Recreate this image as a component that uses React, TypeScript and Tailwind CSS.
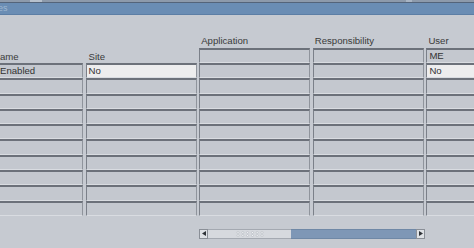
const rows = 10;

type Col = {
  header: string;
  top: boolean; // header sits above row 0 (true) or inside row 0 slot (false)
  row0?: string;
  values: { [i: number]: { text: string; white?: boolean } };
};

const columns: Col[] = [
  { header: 'Name', top: false, values: { 0: { text: 'Enabled' } } },
  { header: 'Site', top: false, values: { 0: { text: 'No', white: true } } },
  { header: 'Application', top: true, row0: '', values: {} },
  { header: 'Responsibility', top: true, row0: '', values: {} },
  { header: 'User', top: true, row0: 'ME', values: { 0: { text: 'No', white: true } } },
];

function Cell({ text, white, tight }: { text?: string; white?: boolean; tight?: boolean }) {
  return (
    <div
      className={`h-[15.3px] border-t-2 border-l border-r border-b border-t-[#6c717a] border-l-[#7b8089] border-r-[#8f949c] border-b-[#d9dce1] text-[9.6px] leading-[12px] text-[#333] ${
        tight ? 'pl-0' : 'pl-[2px]'
      } ${white ? 'bg-[#ededee]' : 'bg-[#c4c8cf]'}`}
    >
      {text}
    </div>
  );
}

function Scrollbar() {
  return (
    <div className="flex h-[10px] w-[226px] ml-[199px] mt-[13px]">
      <div className="w-[9px] h-full bg-[#dfe2e6] border border-[#8a8f97] flex items-center justify-center">
        <svg width="4" height="5" viewBox="0 0 4 5">
          <path d="M4 0 L0 2.5 L4 5 Z" fill="#2f3338" />
        </svg>
      </div>
      <div className="w-[83px] h-full bg-[#d6d9de] border-t border-b border-[#a4a9b1] flex items-center justify-center">
        <svg width="28" height="6" viewBox="0 0 28 6">
          {[0, 1, 2, 3, 4, 5].map((i) => (
            <g key={i}>
              <circle cx={2 + i * 4.8} cy={1.5} r={1} fill="#f5f6f8" stroke="#a9aeb6" strokeWidth={0.5} />
              <circle cx={2 + i * 4.8} cy={4.5} r={1} fill="#f5f6f8" stroke="#a9aeb6" strokeWidth={0.5} />
            </g>
          ))}
        </svg>
      </div>
      <div className="flex-1 h-full bg-[#7e97b6] border-t border-b border-[#6f88a6]" />
      <div className="w-[9px] h-full bg-[#dfe2e6] border border-[#8a8f97] flex items-center justify-center">
        <svg width="4" height="5" viewBox="0 0 4 5">
          <path d="M0 0 L4 2.5 L0 5 Z" fill="#2f3338" />
        </svg>
      </div>
    </div>
  );
}

export default function App() {
  return (
    <div className="w-[474px] h-[248px] overflow-hidden bg-[#c6cad1] font-['Liberation_Sans',sans-serif]">
      {/* window top edge */}
      <div className="h-[3px] bg-[#8d9aab] border-b border-[#54647a] flex">
        <div className="ml-[30px] w-[12px] bg-[#b7c1cd]" />
        <div className="ml-auto mr-[62px] w-[6px] bg-[#a9b5c4]" />
      </div>
      {/* title bar */}
      <div className="h-[12px] bg-[#6a8db4] border-b border-[#5c7ea5] flex items-center">
        <span className="ml-[-2px] text-[9px] leading-none text-[#9fb7d1]">es</span>
      </div>

      {/* grid */}
      <div className="mt-[20px] ml-[-1px] flex gap-[2.6px] w-[600px]">
        {columns.map((col, ci) => (
          <div key={ci} className={ci === 0 ? 'w-[84px] shrink-0' : 'w-[111px] shrink-0'}>
            <div className="h-[12.7px] flex items-end pb-[2px]">
              {col.top && (
                <span className="pl-[2px] text-[9.6px] leading-[11px] text-[#3a3a3a]">{col.header}</span>
              )}
            </div>
            {col.top ? (
              <Cell text={col.row0} />
            ) : (
              <div className="h-[15.3px] flex items-end pb-[1px]">
                <span
                  className={`text-[9.6px] leading-[11px] text-[#3a3a3a] ${ci === 0 ? 'ml-[-6px]' : 'pl-[3px]'}`}
                >
                  {col.header}
                </span>
              </div>
            )}
            {Array.from({ length: rows }).map((_, ri) => (
              <Cell
                key={ri}
                text={col.values[ri]?.text}
                white={col.values[ri]?.white}
                tight={ci === 0}
              />
            ))}
          </div>
        ))}
      </div>

      <Scrollbar />
    </div>
  );
}
